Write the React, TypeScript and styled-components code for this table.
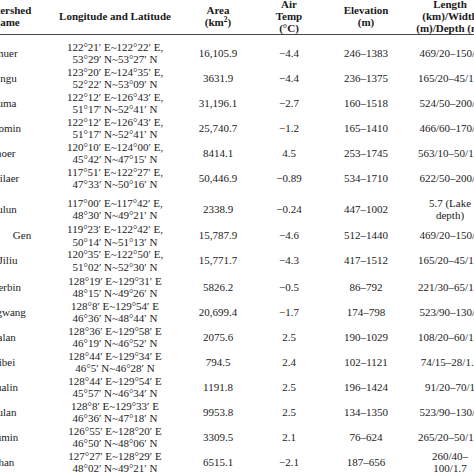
import React from "react";
import styled, { createGlobalStyle } from "styled-components";

const GlobalStyle = createGlobalStyle`
  html, body {
    margin: 0;
    padding: 0;
    background: #ffffff;
    overflow: hidden;
  }
  body {
    width: 474px;
    height: 474px;
  }
`;

const COLS = "80px 138px 68px 74px 80px 88px";

const Sheet = styled.div`
  width: 528px;
  margin: -2px 0 0 -34px;
  font-family: "Liberation Serif", "Times New Roman", serif;
  font-size: 11px;
  color: #222;
`;

const HeadRow = styled.div`
  display: grid;
  grid-template-columns: ${COLS};
  align-items: center;
  height: 36px;
  border-bottom: 1px solid #474747;
  font-weight: 700;
  line-height: 12px;
  color: #1a1a1a;
`;

const Body = styled.div`
  padding-top: 5.5px;
`;

const Row = styled.div<{ $gap?: number }>`
  display: grid;
  grid-template-columns: ${COLS};
  align-items: center;
  min-height: 25px;
  padding-top: ${(p) => p.$gap ?? 0}px;
  line-height: 12.5px;
`;

const Cell = styled.div`
  text-align: center;
  white-space: nowrap;
`;

const NameCell = styled(Cell)<{ $nudge?: number }>`
  transform: translateX(${(p) => p.$nudge ?? -3}px);
`;

const Sup = styled.sup`
  font-size: 7.5px;
  line-height: 0;
  vertical-align: 4px;
`;

type Entry = {
  name: string;
  nudge?: number;
  gap?: number;
  lon: string;
  lat: string;
  area: string;
  temp: string;
  elev: string;
  len: string[];
};

const rows: Entry[] = [
  { name: "Emuer", lon: "122°21′ E~122°22′ E,", lat: "53°29′ N~53°27′ N", area: "16,105.9", temp: "−4.4", elev: "246–1383", len: ["469/20–150/3"] },
  { name: "Pangu", lon: "123°20′ E~124°35′ E,", lat: "52°22′ N~53°09′ N", area: "3631.9", temp: "−4.4", elev: "236–1375", len: ["165/20–45/1.5"] },
  { name: "Huma", lon: "122°12′ E~126°43′ E,", lat: "51°17′ N~52°41′ N", area: "31,196.1", temp: "−2.7", elev: "160–1518", len: ["524/50–200/3"] },
  { name: "Nuomin", lon: "122°12′ E~126°43′ E,", lat: "51°17′ N~52°41′ N", area: "25,740.7", temp: "−1.2", elev: "165–1410", len: ["466/60–170/4"] },
  { name: "Taoer", lon: "120°10′ E~124°00′ E,", lat: "45°42′ N~47°15′ N", area: "8414.1", temp: "4.5", elev: "253–1745", len: ["563/10–50/1.5"] },
  { name: "Hailaer", lon: "117°51′ E~122°27′ E,", lat: "47°33′ N~50°16′ N", area: "50,446.9", temp: "−0.89", elev: "534–1710", len: ["622/50–200/3"] },
  { name: "Hulun", gap: 6, lon: "117°00′ E~117°42′ E,", lat: "48°30′ N~49°21′ N", area: "2338.9", temp: "−0.24", elev: "447–1002", len: ["5.7 (Lake", "depth)"] },
  { name: "Gen", nudge: 16, gap: 1.5, lon: "119°23′ E~122°42′ E,", lat: "50°14′ N~51°13′ N", area: "15,787.9", temp: "−4.6", elev: "512–1440", len: ["469/20–150/3"] },
  { name: "Jiliu", nudge: 2, lon: "120°35′ E~122°50′ E,", lat: "51°02′ N~52°30′ N", area: "15,771.7", temp: "−4.3", elev: "417–1512", len: ["165/20–45/1.5"] },
  { name: "Kuerbin", gap: 1.5, lon: "128°19′ E~129°31′ E", lat: "48°15′ N~49°26′ N", area: "5826.2", temp: "−0.5", elev: "86–792", len: ["221/30–65/1.2"] },
  { name: "Tangwang", lon: "128°8′ E~129°54′ E", lat: "46°36′ N~48°44′ N", area: "20,699.4", temp: "−1.7", elev: "174–798", len: ["523/90–130/4"] },
  { name: "Balan", lon: "128°36′ E~129°58′ E", lat: "46°19′ N~46°52′ N", area: "2075.6", temp: "2.5", elev: "190–1029", len: ["108/20–60/1.5"] },
  { name: "Xibei", lon: "128°44′ E~129°34′ E", lat: "46°5′ N~46°28′ N", area: "794.5", temp: "2.4", elev: "102–1121", len: ["74/15–28/1.5"] },
  { name: "Hualin", lon: "128°44′ E~129°54′ E", lat: "45°57′ N~46°34′ N", area: "1191.8", temp: "2.5", elev: "196–1424", len: ["91/20–70/1"] },
  { name: "Hulan", lon: "128°8′ E~129°33′ E", lat: "46°36′ N~47°18′ N", area: "9953.8", temp: "2.5", elev: "134–1350", len: ["523/90–130/4"] },
  { name: "Numin", lon: "126°55′ E~128°20′ E", lat: "46°50′ N~48°06′ N", area: "3309.5", temp: "2.1", elev: "76–624", len: ["265/20–50/1.5"] },
  { name: "Zhan", lon: "127°27′ E~128°29′ E", lat: "48°02′ N~49°21′ N", area: "6515.1", temp: "−2.1", elev: "187–656", len: ["260/40–", "100/1.7"] },
];

function Lines({ items }: { items: string[] }) {
  return (
    <>
      {items.map((t, i) => (
        <React.Fragment key={i}>
          {i > 0 && <br />}
          {t}
        </React.Fragment>
      ))}
    </>
  );
}

export default function App() {
  return (
    <>
      <GlobalStyle />
      <Sheet>
        <HeadRow>
          <Cell>
            Watershed
            <br />
            Name
          </Cell>
          <Cell>Longitude and Latitude</Cell>
          <Cell>
            Area
            <br />
            (km<Sup>2</Sup>)
          </Cell>
          <Cell>
            Air
            <br />
            Temp
            <br />
            (°C)
          </Cell>
          <Cell>
            Elevation
            <br />
            (m)
          </Cell>
          <Cell>
            Length
            <br />
            (km)/Width
            <br />
            (m)/Depth (m)
          </Cell>
        </HeadRow>
        <Body>
          {rows.map((r) => (
            <Row key={r.name} $gap={r.gap}>
              <NameCell $nudge={r.nudge}>{r.name}</NameCell>
              <Cell>
                {r.lon}
                <br />
                {r.lat}
              </Cell>
              <Cell>{r.area}</Cell>
              <Cell>{r.temp}</Cell>
              <Cell>{r.elev}</Cell>
              <Cell>
                <Lines items={r.len} />
              </Cell>
            </Row>
          ))}
        </Body>
      </Sheet>
    </>
  );
}
